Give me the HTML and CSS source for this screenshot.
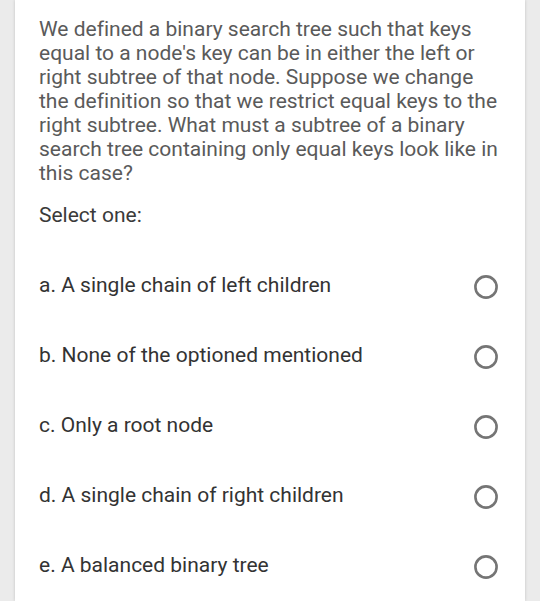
FILE: index.html
```html
<!DOCTYPE html>
<html>
<head>
<meta charset="utf-8">
<link rel="stylesheet" href="styles.css">
</head>
<body>
<div class="card">
  <div class="question">We defined a binary search tree such that keys equal to a node's key can be in either the left or right subtree of that node. Suppose we change the definition so that we restrict equal keys to the right subtree. What must a subtree of a binary search tree containing only equal keys look like in this case?</div>
  <div class="prompt">Select one:</div>
  <div class="options">
    <div class="option"><span class="label">a. A single chain of left children</span><svg class="radio" viewBox="0 0 24 24" width="24" height="24"><circle cx="12" cy="12" r="10.6" fill="none" stroke="#757575" stroke-width="2.6"/></svg></div>
    <div class="option"><span class="label">b. None of the optioned mentioned</span><svg class="radio" viewBox="0 0 24 24" width="24" height="24"><circle cx="12" cy="12" r="10.6" fill="none" stroke="#757575" stroke-width="2.6"/></svg></div>
    <div class="option"><span class="label">c. Only a root node</span><svg class="radio" viewBox="0 0 24 24" width="24" height="24"><circle cx="12" cy="12" r="10.6" fill="none" stroke="#757575" stroke-width="2.6"/></svg></div>
    <div class="option"><span class="label">d. A single chain of right children</span><svg class="radio" viewBox="0 0 24 24" width="24" height="24"><circle cx="12" cy="12" r="10.6" fill="none" stroke="#757575" stroke-width="2.6"/></svg></div>
    <div class="option"><span class="label">e. A balanced binary tree</span><svg class="radio" viewBox="0 0 24 24" width="24" height="24"><circle cx="12" cy="12" r="10.6" fill="none" stroke="#757575" stroke-width="2.6"/></svg></div>
  </div>
</div>
</body>
</html>
```

FILE: styles.css
```css
html, body {
  margin: 0;
  padding: 0;
  background: #ebebeb;
}
body {
  font-family: Roboto, "Noto Sans", sans-serif;
  font-size: 21px;
  line-height: 24px;
  font-variant-ligatures: none;
}
.card {
  box-sizing: border-box;
  margin: 0 15px;
  background: #ffffff;
  box-shadow: 0 0 3px rgba(0, 0, 0, 0.18);
  padding: 17px 27px 0 24px;
  height: 601px;
}
.question {
  color: #5a5a5a;
}
.prompt {
  color: #3a3a3a;
  margin-top: 18px;
}
.options {
  margin-top: 23px;
}
.option {
  display: flex;
  justify-content: space-between;
  align-items: flex-start;
  height: 24px;
  padding: 23px 0;
  color: #333333;
}
.radio {
  flex: none;
  margin-top: 2px;
}
```
